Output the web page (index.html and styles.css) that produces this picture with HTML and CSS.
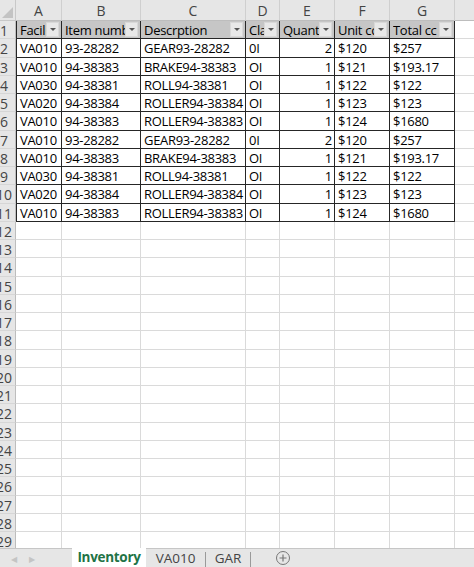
FILE: index.html
```html
<!DOCTYPE html>
<html>
<head>
<meta charset="utf-8">
<link rel="stylesheet" href="styles.css">
</head>
<body>
<div class="sheet" id="sheet"></div>
<div class="tabs">
  <div class="nav"><span class="arr">&#9664;</span><span class="arr">&#9654;</span></div>
  <div class="tab active">Inventory</div>
  <div class="tab w59">VA010</div>
  <div class="sep"></div>
  <div class="tab w44">GAR</div>
  <div class="sep"></div>
  <div class="add"><svg width="16" height="16" viewBox="0 0 16 16"><circle cx="8" cy="8" r="6.5" fill="none" stroke="#777" stroke-width="1"/><path d="M8 4.5v7M4.5 8h7" stroke="#777" stroke-width="1.2"/></svg></div>
</div>
<script src="app.js"></script>
</body>
</html>
```
FILE: app.js
```js
const cols = ["A","B","C","D","E","F","G",""];
const head = ["Facili","Item numb","Descrption","Cla","Quanti","Unit cc","Total cc"];
const rows = [
["VA010","93-28282","GEAR93-28282","0I","2","$120","$257"],
["VA010","94-38383","BRAKE94-38383","OI","1","$121","$193.17"],
["VA030","94-38381","ROLL94-38381","OI","1","$122","$122"],
["VA020","94-38384","ROLLER94-38384","OI","1","$123","$123"],
["VA010","94-38383","ROLLER94-38383","OI","1","$124","$1680"],
["VA010","93-28282","GEAR93-28282","0I","2","$120","$257"],
["VA010","94-38383","BRAKE94-38383","OI","1","$121","$193.17"],
["VA030","94-38381","ROLL94-38381","OI","1","$122","$122"],
["VA020","94-38384","ROLLER94-38384","OI","1","$123","$123"],
["VA010","94-38383","ROLLER94-38383","OI","1","$124","$1680"]
];
const s = document.getElementById("sheet");
let h = '<div class="corner"><span class="tri"></span></div>';
cols.forEach(c => { h += '<div class="colh">' + c + '</div>'; });
for (let r = 1; r <= 29; r++) {
  h += '<div class="rowh"><span>' + r + '</span></div>';
  for (let c = 0; c < 8; c++) {
    if (c === 7) { h += '<div class="cell"></div>'; continue; }
    if (r === 1) {
      h += '<div class="cell hd' + (c === 0 ? ' first' : '') + '"><span class="t">' + head[c] + '</span><span class="flt"><span class="dn"></span></span></div>';
    } else if (r <= 11) {
      const v = rows[r - 2][c];
      h += '<div class="cell dt' + (c === 0 ? ' first' : '') + (c === 4 ? ' num' : '') + '">' + v + '</div>';
    } else {
      h += '<div class="cell"></div>';
    }
  }
}
s.innerHTML = h;
```
FILE: styles.css
```css
html, body { margin: 0; padding: 0; }
body {
  width: 474px; height: 567px; overflow: hidden; background: #fff;
  font-family: "Open Sans", "Liberation Sans", sans-serif;
  font-size: 13px; color: #000;
}
.sheet {
  display: grid;
  grid-template-columns: 16px 46px 79px 105px 34px 55px 55px 65px 40px;
  grid-template-rows: 21px repeat(29, 18.25px);
  height: 548px; overflow: hidden;
}
.corner { background: #e6e6e6; border-right: 1px solid #c8c8c8; border-bottom: 1px solid #c8c8c8; box-sizing: border-box; position: relative; }
.tri { position: absolute; right: 2px; bottom: 2px; width: 0; height: 0; border-left: 11px solid transparent; border-bottom: 11px solid #c3c3c3; }
.colh {
  background: #e6e6e6; color: #444; text-align: center; font-size: 14px; line-height: 22px;
  border-right: 1px solid #cfcfcf; border-bottom: 1px solid #bdbdbd; box-sizing: border-box;
}
.rowh {
  background: #e6e6e6; color: #444; font-size: 14px; line-height: 19px; overflow: hidden;
  border-right: 1px solid #bdbdbd; border-bottom: 1px solid #d6d6d6; box-sizing: border-box;
}
.rowh span { display: block; width: 24px; margin-left: -8px; text-align: center; }
.cell {
  box-sizing: border-box; border-right: 1px solid #dadada; border-bottom: 1px solid #dadada;
  white-space: nowrap; overflow: hidden; line-height: 18px; padding: 0 2px 0 3px; letter-spacing: -0.3px;
}
.dt { border-right-color: #262626; border-bottom-color: #262626; }
.dt.first { border-left: 1px solid #262626; }
.num { text-align: right; }
.hd {
  background: #c6c6c6; border-right: 1px solid #262626; border-bottom: 1px solid #262626;
  display: flex; align-items: center; padding: 0 2px 0 3px; line-height: 18px;
}
.hd.first { border-left: 1px solid #262626; }
.hd .t { overflow: hidden; flex: 1; min-width: 0; }
.flt {
  flex: none; width: 13px; height: 15px; background: #e8e8e8; border: 1px solid #d8d8d8; box-sizing: border-box;
  display: flex; align-items: center; justify-content: center; margin-left: -2px;
}
.dn { width: 0; height: 0; border-left: 3px solid transparent; border-right: 3px solid transparent; border-top: 3px solid #555; }
.tabs {
  height: 19px; background: #e6e6e6; border-top: 1px solid #c6c6c6; box-sizing: border-box;
  display: flex; align-items: stretch; font-size: 13.5px;
}
.nav { width: 72px; display: flex; align-items: center; gap: 12px; padding-left: 11px; box-sizing: border-box; }
.arr { color: #c4c4c4; font-size: 8px; }
.tab { color: #444; line-height: 18px; text-align: center; box-sizing: border-box; }
.w59 { width: 59px; }
.w44 { width: 44px; }
.tab.active { background: #fff; color: #217346; font-weight: bold; width: 74px; margin-top: -1px; line-height: 19px; letter-spacing: -0.3px; }
.sep { width: 1px; background: #9a9a9a; margin: 3px 0 0; }
.add { margin-left: 24px; display: flex; align-items: center; }
```
